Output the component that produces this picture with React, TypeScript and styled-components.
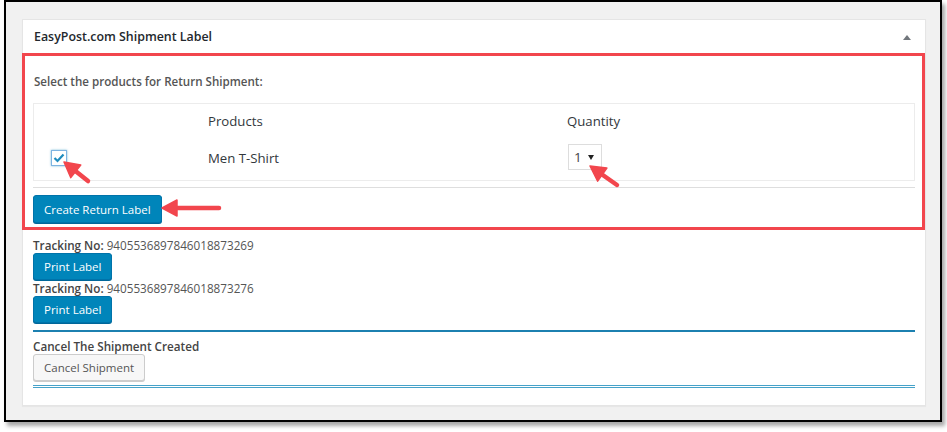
import React from 'react';
import styled, { createGlobalStyle } from 'styled-components';

const GlobalStyle = createGlobalStyle`
  html, body {
    margin: 0;
    padding: 0;
    background: #ffffff;
  }
  body {
    font-family: 'Open Sans', 'Noto Sans', Arial, sans-serif;
    color: #444;
  }
`;

const Page = styled.div`
  position: relative;
  width: 947px;
  height: 432px;
  padding: 0 0 0 4px;
  box-sizing: border-box;
`;

const Frame = styled.div`
  width: 938px;
  height: 422px;
  box-sizing: border-box;
  border: 2px solid #000;
  background: #f1f1f1;
  box-shadow: 3px 4px 4px rgba(0, 0, 0, 0.35);
  padding: 17px 0 0 16px;
`;

const Panel = styled.div`
  width: 904px;
  height: 387px;
  box-sizing: border-box;
  background: #fff;
  border: 1px solid #e5e5e5;
  box-shadow: 0 1px 1px rgba(0, 0, 0, 0.04);
`;

const PanelHeader = styled.div`
  height: 33px;
  display: flex;
  align-items: center;
  justify-content: space-between;
  padding: 0 14px 0 11px;
  font-size: 12.4px;
  font-weight: 600;
  color: #23282d;
`;

const Toggle = styled.span`
  width: 0;
  height: 0;
  border-left: 4px solid transparent;
  border-right: 4px solid transparent;
  border-bottom: 5px solid #72777c;
  margin-top: 2px;
`;

const Highlight = styled.div`
  margin-left: -1px;
  width: 903px;
  box-sizing: border-box;
  border: 3px solid #f2464d;
  padding: 18px 7px 4px 8px;
`;

const Intro = styled.div`
  font-size: 11.6px;
  line-height: 16px;
  font-weight: 600;
  color: #555;
  padding-left: 1px;
  margin-bottom: 13px;
`;

const Table = styled.div`
  border: 1px solid #ececec;
  display: grid;
  grid-template-columns: 174px 359px 1fr;
`;

const Cell = styled.div<{ $head?: boolean }>`
  height: ${(p) => (p.$head ? 34 : 42)}px;
  display: flex;
  align-items: center;
  font-size: 13.2px;
  color: #32373c;
  padding-bottom: ${(p) => (p.$head ? 0 : 3)}px;
  box-sizing: border-box;
`;

const CheckBox = styled.span`
  width: 16px;
  height: 16px;
  box-sizing: border-box;
  margin-left: 17px;
  border: 1px solid #7eb4e2;
  box-shadow: 0 0 2px rgba(30, 140, 190, 0.6);
  display: flex;
  align-items: center;
  justify-content: center;
  background: #fff;
`;

const QtySelect = styled.span`
  width: 34px;
  height: 26px;
  box-sizing: border-box;
  border: 1px solid #ddd;
  display: flex;
  align-items: center;
  padding-left: 5px;
  gap: 6px;
  font-size: 13.5px;
  color: #444;
  margin-top: -1px;
  margin-left: 1px;
  &::after {
    content: '';
    border-left: 3px solid transparent;
    border-right: 3px solid transparent;
    border-top: 5px solid #222;
    margin-top: 1px;
  }
`;

const Rule = styled.div<{ $top?: number }>`
  margin-top: ${(p) => p.$top ?? 0}px;
  height: 1px;
  background: #dedede;
`;

const StrongRule = styled(Rule)`
  height: 2px;
  background: #1c80b0;
`;

const DoubleRule = styled(Rule)`
  height: 3px;
  background: linear-gradient(to bottom, #45a2c9 0, #45a2c9 1px, #fff 1px, #fff 2px, #45a2c9 2px, #45a2c9 3px);
`;

const Button = styled.button<{ $secondary?: boolean; $tall?: boolean }>`
  display: block;
  height: ${(p) => (p.$tall ? 28 : 27)}px;
  padding: 0 10px;
  font-family: inherit;
  font-size: 11.5px;
  border-radius: 3px;
  cursor: pointer;
  color: ${(p) => (p.$secondary ? '#555' : '#fff')};
  background: ${(p) => (p.$secondary ? '#f7f7f7' : '#0085ba')};
  border: 1px solid ${(p) => (p.$secondary ? '#ccc' : '#0073aa')};
  box-shadow: ${(p) => (p.$secondary ? '0 1px 0 #ccc' : '0 1px 0 #006799')};
`;

const Body = styled.div`
  padding: 7px 10px 0 10px;
`;

const Line = styled.div`
  font-size: 11.7px;
  color: #555;
  line-height: 16px;
  b {
    font-weight: 600;
    color: #444;
  }
`;

const Stack = styled.div<{ $top?: number }>`
  display: flex;
  flex-direction: column;
  align-items: flex-start;
  margin-top: ${(p) => p.$top ?? 0}px;
`;

const Annotations = styled.svg`
  position: absolute;
  left: 0;
  top: 0;
  pointer-events: none;
`;

const Arrow = ({ x1, y1, x2, y2 }: { x1: number; y1: number; x2: number; y2: number }) => {
  // tail (x1,y1) -> tip (x2,y2)
  const dx = x2 - x1;
  const dy = y2 - y1;
  const len = Math.hypot(dx, dy);
  const ux = dx / len;
  const uy = dy / len;
  const head = 15;
  const half = 8;
  const bx = x2 - ux * head;
  const by = y2 - uy * head;
  const pts = `${x2},${y2} ${bx - uy * half},${by + ux * half} ${bx + uy * half},${by - ux * half}`;
  return (
    <g>
      <line x1={x1} y1={y1} x2={bx + ux * 2} y2={by + uy * 2} stroke="#f2464d" strokeWidth={4.5} strokeLinecap="round" />
      <polygon points={pts} fill="#f2464d" stroke="#f2464d" strokeWidth={1.5} strokeLinejoin="round" />
    </g>
  );
};

const App = () => {
  return (
    <Page>
      <GlobalStyle />
      <Frame>
        <Panel>
          <PanelHeader>
            <span>EasyPost.com Shipment Label</span>
            <Toggle />
          </PanelHeader>
          <Highlight>
            <Intro>Select the products for Return Shipment:</Intro>
            <Table>
              <Cell $head />
              <Cell $head>Products</Cell>
              <Cell $head>Quantity</Cell>
              <Cell>
                <CheckBox>
                  <svg width="12" height="10" viewBox="0 0 12 10">
                    <path d="M1.5 5 L4.5 8 L10.5 1.5" fill="none" stroke="#1e8cbe" strokeWidth="2.2" />
                  </svg>
                </CheckBox>
              </Cell>
              <Cell>Men T-Shirt</Cell>
              <Cell>
                <QtySelect>1</QtySelect>
              </Cell>
            </Table>
            <Rule $top={6} />
            <Stack $top={7}>
              <Button $tall>Create Return Label</Button>
            </Stack>
          </Highlight>
          <Body>
            <Stack>
              <Line>
                <b>Tracking No:</b> 9405536897846018873269
              </Line>
              <Button>Print Label</Button>
              <Line>
                <b>Tracking No:</b> 9405536897846018873276
              </Line>
              <Button>Print Label</Button>
            </Stack>
            <StrongRule $top={7} />
            <Stack $top={6}>
              <Line>
                <b>Cancel The Shipment Created</b>
              </Line>
              <Button $secondary>Cancel Shipment</Button>
            </Stack>
            <DoubleRule $top={4} />
          </Body>
        </Panel>
      </Frame>
      <Annotations width="947" height="432" viewBox="0 0 947 432">
        <Arrow x1={88} y1={181} x2={64} y2={162} />
        <Arrow x1={219} y1={208} x2={162} y2={208} />
        <Arrow x1={617} y1={185} x2={590} y2={166} />
      </Annotations>
    </Page>
  );
};

export default App;
